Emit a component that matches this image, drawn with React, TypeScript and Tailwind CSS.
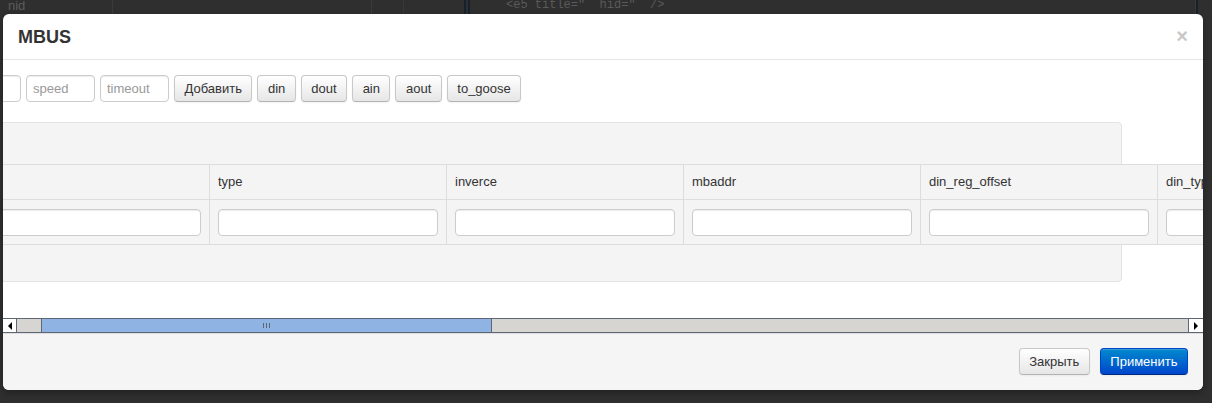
import React from 'react';

const columns = [
  'nid', 'type', 'inverce', 'mbaddr', 'din_reg_offset', 'din_type',
  'dout_reg_offset', 'dout_type', 'ain_reg_offset', 'ain_type',
  'aout_reg_offset', 'aout_type', 'to_goose',
];

const toolButtons = ['Добавить', 'din', 'dout', 'ain', 'aout', 'to_goose'];

function Btn({ children }: { children: React.ReactNode }) {
  return (
    <button className="h-[27px] px-[9.5px] rounded-[4px] border border-[#c8c8c8] border-b-[#b3b3b3] bg-linear-to-b from-[#ffffff] to-[#e6e6e6] text-[13px] leading-[17px] text-[#333] shadow-[inset_0_1px_0_rgba(255,255,255,.2),0_1px_2px_rgba(0,0,0,.05)]">
      {children}
    </button>
  );
}

function TextInput({ placeholder, className = '' }: { placeholder?: string; className?: string }) {
  return (
    <input
      placeholder={placeholder}
      className={`h-[27px] rounded-[4px] border border-[#ccc] bg-white px-[6px] text-[13px] text-[#555] placeholder:text-[#999] outline-none shadow-[inset_0_1px_1px_rgba(0,0,0,.075)] ${className}`}
    />
  );
}

function Backdrop() {
  return (
    <div className="flex h-[14px] text-[#5c5c5c] text-[13px] leading-[12px]">
      <div className="w-[113px] border-r border-[#3a3a3a] pl-[8px]">nid</div>
      <div className="w-[259px] border-r border-[#3a3a3a]" />
      <div className="w-[32px] border-r border-[#383838]" />
      <div className="w-[60px]" />
      <div className="w-[6px] border-x-[2px] border-[#16212b]" />
      <div className="w-[36px]" />
      <div className="w-[690px] border-r border-[#3a3a3a] font-['Liberation_Mono',monospace] text-[12px] leading-[10px] text-[#5a5a5a] whitespace-pre">
        {'<e5 title="  hid="  />'}
      </div>
      <div className="w-[2px] bg-[#16212b]" />
    </div>
  );
}

function ScrollBar() {
  return (
    <div className="flex h-[15px] border-y border-[#5f6776] bg-[#d6d5d2]">
      <div className="flex w-[14px] items-center justify-center border-r border-[#5f6776] bg-white">
        <div className="h-0 w-0 border-y-[4px] border-r-[4px] border-y-transparent border-r-black" />
      </div>
      <div className="w-[24px]" />
      <div className="flex w-[451px] items-center justify-center gap-[2px] border-x border-[#5f6776] bg-[#8fb4e3]">
        <div className="h-[5px] w-px bg-[#5f6776]" />
        <div className="h-[5px] w-px bg-[#5f6776]" />
        <div className="h-[5px] w-px bg-[#5f6776]" />
      </div>
      <div className="flex-1" />
      <div className="flex w-[15px] items-center justify-center border-l border-[#5f6776] bg-white">
        <div className="h-0 w-0 border-y-[4px] border-l-[4px] border-y-transparent border-l-black" />
      </div>
    </div>
  );
}

export default function App() {
  return (
    <div className="relative h-[403px] w-[1212px] overflow-hidden bg-[#2f2f2f] font-['Liberation_Sans',Arial,sans-serif]">
      <Backdrop />

      <div className="absolute left-[3px] top-[14px] w-[1200px] overflow-hidden rounded-[6px] bg-white shadow-[0_3px_7px_rgba(0,0,0,.3)]">
        <div className="relative flex h-[46px] items-center border-b border-[#e5e5e5] px-[15px]">
          <h3 className="text-[18px] font-bold leading-[20px] text-[#333]">MBUS</h3>
          <span className="absolute right-[15px] top-[12px] text-[20px] font-bold leading-[20px] text-[#c8c8c8]">×</span>
        </div>

        <div className="overflow-hidden">
          <div className="-ml-[66px] w-[3122px] px-[15px] pt-[15px] pb-[36px]">
            <div className="flex gap-[5px]">
              <TextInput placeholder="port" className="w-[69px]" />
              <TextInput placeholder="speed" className="w-[69px]" />
              <TextInput placeholder="timeout" className="w-[69px]" />
              {toolButtons.map((b) => (
                <Btn key={b}>{b}</Btn>
              ))}
            </div>

            <div className="mt-[20px] h-[160px] w-[1170px] rounded-[4px] border border-[#e3e3e3] bg-[#f4f4f4] pl-[19px] pt-[41px]">
              <table className="w-[3081px] min-w-[3081px] table-fixed border-collapse bg-[#f4f4f4] text-[13px] text-[#333]">
                <thead>
                  <tr className="h-[35px]">
                    {columns.map((c) => (
                      <th key={c} className="w-[237px] border border-[#dddddd] px-[8px] text-left font-normal">
                        {c}
                      </th>
                    ))}
                  </tr>
                </thead>
                <tbody>
                  <tr className="h-[45px]">
                    {columns.map((c) => (
                      <td key={c} className="border border-[#dddddd] px-[8px]">
                        <TextInput className="block w-full" />
                      </td>
                    ))}
                  </tr>
                </tbody>
              </table>
            </div>
          </div>
        </div>

        <ScrollBar />

        <div className="flex justify-end gap-[10px] border-t border-[#dddddd] bg-[#f5f5f5] px-[15px] pt-[14px] pb-[15px]">
          <Btn>Закрыть</Btn>
          <button className="h-[27px] px-[9.5px] rounded-[4px] border border-[#0044cc] border-b-[#002a80] bg-linear-to-b from-[#0088cc] to-[#0044cc] text-[13px] leading-[17px] text-white shadow-[inset_0_1px_0_rgba(255,255,255,.2),0_1px_2px_rgba(0,0,0,.05)]">
            Применить
          </button>
        </div>
      </div>
    </div>
  );
}
